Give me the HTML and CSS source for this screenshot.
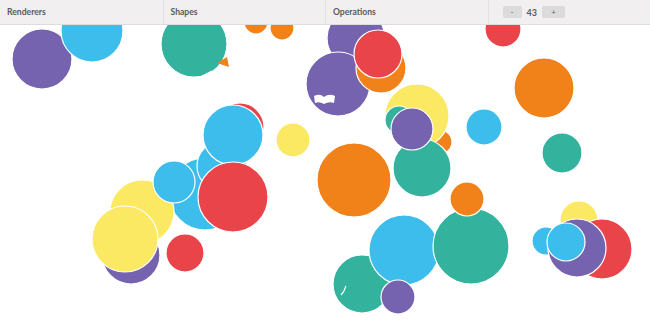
FILE: index.html
```html
<!DOCTYPE html>
<html lang="en">
<head>
  <meta charset="UTF-8">
  <meta name="viewport" content="width=device-width, initial-scale=1.0">
  <title>Bubbles</title>
  <link rel="stylesheet" href="styles.css">
</head>
<body>
  <div class="toolbar">
    <div class="toolbar-cell">Renderers</div>
    <div class="toolbar-cell">Shapes</div>
    <div class="toolbar-cell">Operations</div>
    <div class="toolbar-cell counter">
      <button class="btn btn-minus">-</button>
      <span class="count">43</span>
      <button class="btn btn-plus">+</button>
    </div>
  </div>

  <svg class="stage" width="650" height="300" viewBox="0 25 650 300">
    <g stroke="#fff" stroke-width="1.2">
      <circle cx="42" cy="59" r="30" class="purple"/>
      <circle cx="92" cy="31" r="31" class="blue"/>
      <circle cx="194" cy="44" r="33" class="teal"/>
      <path d="M217 63 L227 57 L229 67 Z" class="orange" stroke="none"/>
      <circle cx="256" cy="22" r="12" class="orange"/>
      <circle cx="282" cy="28" r="12" class="orange"/>
      <circle cx="356" cy="38" r="29" class="purple"/>
      <circle cx="338" cy="84" r="32" class="purple"/>
      <circle cx="381" cy="68" r="25" class="orange"/>
      <circle cx="378" cy="54" r="24" class="red"/>
      <circle cx="503" cy="29" r="18" class="red"/>
      <circle cx="544" cy="88" r="30" class="orange"/>
      <circle cx="293" cy="140" r="17" class="yellow"/>
      <circle cx="240" cy="127" r="24" class="red"/>
      <circle cx="440" cy="142" r="12" class="orange"/>
      <circle cx="417" cy="116" r="32" class="yellow"/>
      <circle cx="399" cy="120" r="14" class="teal"/>
      <circle cx="422" cy="168" r="29" class="teal"/>
      <circle cx="412" cy="129" r="21" class="purple"/>
      <circle cx="484" cy="127" r="18" class="blue"/>
      <circle cx="562" cy="153" r="20" class="teal"/>
      <circle cx="354" cy="180" r="37" class="orange"/>
      <circle cx="205" cy="194" r="36" class="blue"/>
      <circle cx="222" cy="166" r="25" class="blue"/>
      <circle cx="233" cy="135" r="30" class="blue"/>
      <circle cx="233" cy="197" r="35" class="red"/>
      <circle cx="142" cy="212" r="32" class="yellow"/>
      <circle cx="174" cy="182" r="21" class="blue"/>
      <circle cx="131" cy="255" r="29" class="purple"/>
      <circle cx="125" cy="239" r="33" class="yellow"/>
      <circle cx="185" cy="253" r="19" class="red"/>
      <circle cx="362" cy="284" r="29" class="teal"/>
      <circle cx="404" cy="250" r="35" class="blue"/>
      <circle cx="471" cy="246" r="38" class="teal"/>
      <circle cx="467" cy="199" r="17" class="orange"/>
      <circle cx="398" cy="297" r="17" class="purple"/>
      <circle cx="579" cy="220" r="19" class="yellow"/>
      <circle cx="602" cy="249" r="30" class="red"/>
      <circle cx="546" cy="241" r="14" class="blue"/>
      <circle cx="577" cy="248" r="29" class="purple"/>
      <circle cx="566" cy="242" r="19" class="blue"/>
    </g>
    <!-- leftover strokes from shapes hidden under others -->
    <g fill="none" stroke="#fff" stroke-width="1.2">
      <path d="M202 76 L212 71"/>
      <path d="M346 286 Q344 292 341 295"/>
    </g>
    <path d="M314 96 Q320 93 324 97 Q329 93 335 96 L334 103 Q329 101 324 104 Q319 101 315 103 Z" fill="#fff"/>
  </svg>
</body>
</html>
```

FILE: styles.css
```css
:root {
  --purple: #7663af;
  --blue: #3cbdec;
  --teal: #33b29e;
  --orange: #f08219;
  --red: #e9444a;
  --yellow: #fbe964;
}

body {
  margin: 0;
  font-family: Lato, 'Open Sans', sans-serif;
  background: #fff;
  color: #555;
  overflow: hidden;
}

.toolbar {
  display: grid;
  grid-template-columns: repeat(4, 1fr);
  height: 24px;
  background-color: #f1efef;
  border-bottom: 1px solid #dedcdc;
}

.toolbar-cell {
  display: flex;
  align-items: center;
  padding-left: 7px;
  font-size: 8.6px;
  font-weight: 700;
  color: #5a5a5a;
  border-left: 1px solid #e2e0e0;
}

.toolbar-cell:first-child {
  border-left: none;
}

.counter {
  padding-left: 14px;
  gap: 3px;
}

.btn {
  height: 12px;
  padding: 0;
  border: none;
  border-radius: 2px;
  background-color: #dcdbdb;
  color: #666;
  font-family: inherit;
  font-size: 8px;
  line-height: 12px;
}

.btn-minus {
  width: 19px;
}

.btn-plus {
  width: 23px;
}

.count {
  font-size: 9px;
  padding: 0 2px;
}

.stage {
  display: block;
}

.purple { fill: var(--purple); }
.blue { fill: var(--blue); }
.teal { fill: var(--teal); }
.orange { fill: var(--orange); }
.red { fill: var(--red); }
.yellow { fill: var(--yellow); }
```
